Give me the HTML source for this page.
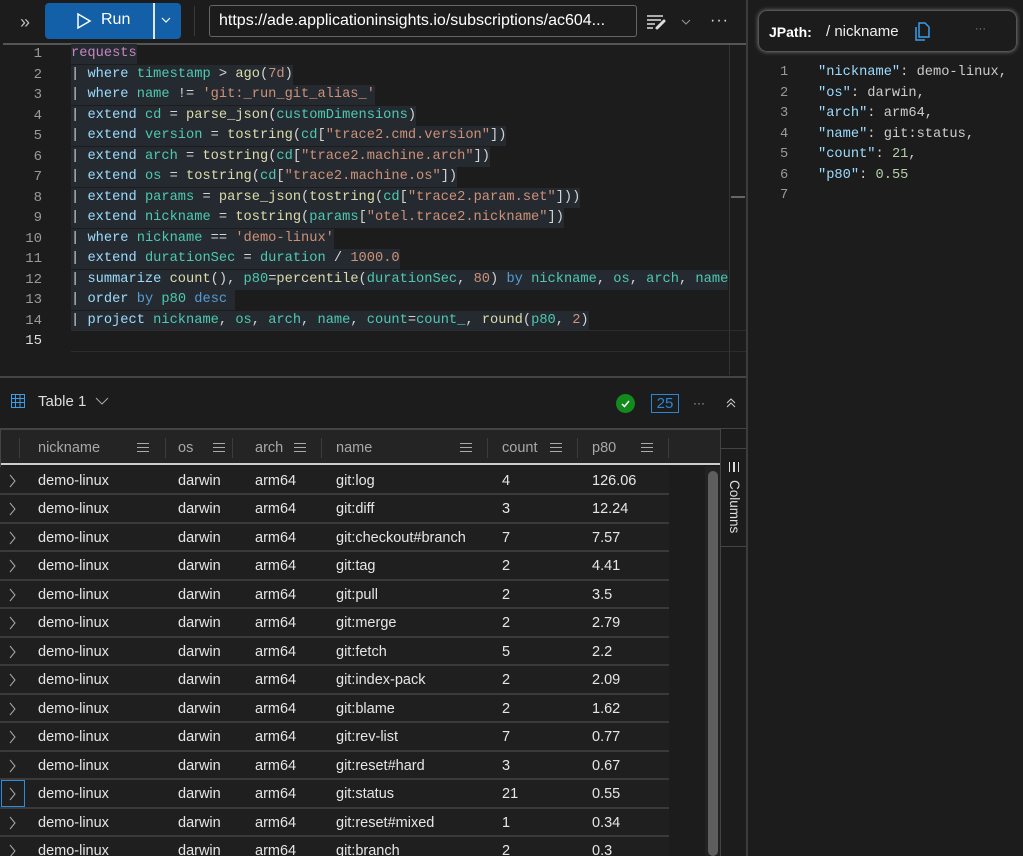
<!DOCTYPE html>
<html><head><meta charset="utf-8"><style>
*{margin:0;padding:0;box-sizing:border-box}
html,body{width:1023px;height:856px;overflow:hidden}
body{background:#1c1c1c;font-family:"Liberation Sans",sans-serif;color:#ddd;position:relative}
.abs{position:absolute}
.mono{font-family:"Liberation Mono",monospace;font-size:13.7px}
.ln{position:absolute;left:0;width:42px;text-align:right;color:#9a9a9a;font-size:14px}
.cl{position:absolute;left:71px;white-space:pre;background:#252a30;height:20px;line-height:20px}
.k{color:#9cdcfe}.t{color:#4ec9b0}.f{color:#dcdcaa}.s{color:#ce9178}.b{color:#569cd6}.p{color:#c586c0}.w{color:#d4d4d4}.n{color:#ce9178}
.row{position:absolute;left:0;width:669px;height:28.5px;background:#1f1f1f;border-bottom:2px solid #3a3a3a;font-size:14.5px;color:#e6e6e6}
.row span{position:absolute;top:6px}
.hd span{position:absolute;top:10px;color:#a8a8a8;font-size:14.5px}
.menu{position:absolute;top:13px;width:12px;height:9px;border-top:1.5px solid #aaa;border-bottom:1.5px solid #aaa}
.menu:after{content:"";position:absolute;left:0;right:0;top:2.5px;border-top:1.5px solid #aaa}
.sep{position:absolute;top:8px;width:1px;height:20px;background:#3c3c3c}
</style></head><body>
<div class="abs" style="left:20px;top:12px;color:#bbb;font-size:18px">»</div>
<div class="abs" style="left:45px;top:3px;width:136px;height:36px;background:#1460a8;border-radius:4px"></div>
<svg class="abs" style="left:76px;top:12px" width="16" height="18"><path d="M2 2 L14 9 L2 16 Z" fill="none" stroke="#fff" stroke-width="1.5"/></svg>
<div class="abs" style="left:101px;top:11px;color:#fff;font-size:16px">Run</div>
<div class="abs" style="left:153px;top:3px;width:2px;height:36px;background:#dfe8f2"></div>
<svg class="abs" style="left:161px;top:17px" width="10" height="6"><path d="M1 1 L5 5 L9 1" fill="none" stroke="#fff" stroke-width="1.2"/></svg>
<div class="abs" style="left:194px;top:6px;width:1px;height:30px;background:#3a3a3a"></div>
<div class="abs" style="left:209px;top:5px;width:428px;height:32px;border:1px solid #666;border-radius:3px;color:#fff;font-size:16px;padding:6px 9px;white-space:nowrap;overflow:hidden">https://ade.applicationinsights.io/subscriptions/ac604...</div>
<svg class="abs" style="left:646px;top:13px" width="22" height="18"><path d="M1 3h16M1 7h14M1 11h8M1 15h6" stroke="#ddd" stroke-width="1.5"/><path d="M11 15 L18 8" stroke="#ddd" stroke-width="3" stroke-linecap="round"/></svg>
<svg class="abs" style="left:681px;top:19px" width="10" height="6"><path d="M1 1 L5 5 L9 1" fill="none" stroke="#999" stroke-width="1"/></svg>
<div class="abs" style="left:710px;top:12px;color:#ddd;font-size:16px;letter-spacing:1px">···</div>
<div class="abs" style="left:3px;top:43px;width:743px;height:2px;background:#555"></div>
<div class="mono">
<div class="ln" style="top:44px;line-height:20px">1</div><div class="cl" style="top:44px"><span class="p">requests</span></div>
<div class="ln" style="top:64.5px;line-height:20px">2</div><div class="cl" style="top:64.5px"><span class="w">| </span><span class="k">where</span> <span class="t">timestamp</span><span class="w"> &gt; </span><span class="f">ago</span><span class="w">(</span><span class="n">7d</span><span class="w">)</span></div>
<div class="ln" style="top:85px;line-height:20px">3</div><div class="cl" style="top:85px"><span class="w">| </span><span class="k">where</span> <span class="t">name</span><span class="w"> != </span><span class="s">'git:_run_git_alias_'</span></div>
<div class="ln" style="top:105.5px;line-height:20px">4</div><div class="cl" style="top:105.5px"><span class="w">| </span><span class="k">extend</span> <span class="t">cd</span><span class="w"> = </span><span class="f">parse_json</span><span class="w">(</span><span class="t">customDimensions</span><span class="w">)</span></div>
<div class="ln" style="top:126px;line-height:20px">5</div><div class="cl" style="top:126px"><span class="w">| </span><span class="k">extend</span> <span class="t">version</span><span class="w"> = </span><span class="f">tostring</span><span class="w">(</span><span class="t">cd</span><span class="w">[</span><span class="s">"trace2.cmd.version"</span><span class="w">])</span></div>
<div class="ln" style="top:146.5px;line-height:20px">6</div><div class="cl" style="top:146.5px"><span class="w">| </span><span class="k">extend</span> <span class="t">arch</span><span class="w"> = </span><span class="f">tostring</span><span class="w">(</span><span class="t">cd</span><span class="w">[</span><span class="s">"trace2.machine.arch"</span><span class="w">])</span></div>
<div class="ln" style="top:167px;line-height:20px">7</div><div class="cl" style="top:167px"><span class="w">| </span><span class="k">extend</span> <span class="t">os</span><span class="w"> = </span><span class="f">tostring</span><span class="w">(</span><span class="t">cd</span><span class="w">[</span><span class="s">"trace2.machine.os"</span><span class="w">])</span></div>
<div class="ln" style="top:187.5px;line-height:20px">8</div><div class="cl" style="top:187.5px"><span class="w">| </span><span class="k">extend</span> <span class="t">params</span><span class="w"> = </span><span class="f">parse_json</span><span class="w">(</span><span class="f">tostring</span><span class="w">(</span><span class="t">cd</span><span class="w">[</span><span class="s">"trace2.param.set"</span><span class="w">]))</span></div>
<div class="ln" style="top:208px;line-height:20px">9</div><div class="cl" style="top:208px"><span class="w">| </span><span class="k">extend</span> <span class="t">nickname</span><span class="w"> = </span><span class="f">tostring</span><span class="w">(</span><span class="t">params</span><span class="w">[</span><span class="s">"otel.trace2.nickname"</span><span class="w">])</span></div>
<div class="ln" style="top:228.5px;line-height:20px">10</div><div class="cl" style="top:228.5px"><span class="w">| </span><span class="k">where</span> <span class="t">nickname</span><span class="w"> == </span><span class="s">'demo-linux'</span></div>
<div class="ln" style="top:249px;line-height:20px">11</div><div class="cl" style="top:249px"><span class="w">| </span><span class="k">extend</span> <span class="t">durationSec</span><span class="w"> = </span><span class="t">duration</span><span class="w"> / </span><span class="n">1000.0</span></div>
<div class="ln" style="top:269.5px;line-height:20px">12</div><div class="cl" style="top:269.5px"><span class="w">| </span><span class="k">summarize</span> <span class="f">count</span><span class="w">(), </span><span class="t">p80</span><span class="w">=</span><span class="f">percentile</span><span class="w">(</span><span class="t">durationSec</span><span class="w">, </span><span class="n">80</span><span class="w">) </span><span class="b">by</span> <span class="t">nickname</span><span class="w">, </span><span class="t">os</span><span class="w">, </span><span class="t">arch</span><span class="w">, </span><span class="t">name</span></div>
<div class="ln" style="top:290px;line-height:20px">13</div><div class="cl" style="top:290px"><span class="w">| </span><span class="k">order</span> <span class="b">by</span> <span class="t">p80</span> <span class="b">desc</span> </div>
<div class="ln" style="top:310.5px;line-height:20px">14</div><div class="cl" style="top:310.5px"><span class="w">| </span><span class="k">project</span> <span class="t">nickname</span><span class="w">, </span><span class="t">os</span><span class="w">, </span><span class="t">arch</span><span class="w">, </span><span class="t">name</span><span class="w">, </span><span class="t">count</span><span class="w">=</span><span class="t">count_</span><span class="w">, </span><span class="f">round</span><span class="w">(</span><span class="t">p80</span><span class="w">, </span><span class="n">2</span><span class="w">)</span></div>
<div class="ln" style="top:331px;line-height:20px;color:#ddd">15</div>
</div>
<div class="abs" style="left:71px;top:330px;width:675px;height:22px;border-top:1px solid #2c2c2c;border-bottom:1px solid #2c2c2c"></div>
<div class="abs" style="left:729px;top:45px;width:1px;height:330px;background:#333"></div>
<div class="abs" style="left:731px;top:196px;width:14px;height:2px;background:#666"></div>
<div class="abs" style="left:0;top:376px;width:746px;height:2px;background:#444"></div>
<div class="abs" style="left:746px;top:0;width:2px;height:856px;background:#3c3c3c"></div>
<svg class="abs" style="left:11px;top:394px" width="14" height="14"><rect x="0.5" y="0.5" width="13" height="13" fill="none" stroke="#3b9ce8"/><path d="M0 4.5h14M0 8.5h14M4.5 0v14M9 0v14" stroke="#3b9ce8"/></svg>
<div class="abs" style="left:38px;top:393px;font-size:15px;color:#ddd">Table 1</div>
<svg class="abs" style="left:95px;top:397px" width="14" height="8"><path d="M1 1 L7 7 L13 1" fill="none" stroke="#aaa" stroke-width="1"/></svg>
<div class="abs" style="left:616px;top:394px;width:19px;height:19px;border-radius:50%;background:#138a1c"></div>
<svg class="abs" style="left:620px;top:398px" width="11" height="11"><path d="M2 6 L4.5 8.5 L9 3" fill="none" stroke="#fff" stroke-width="1.5"/></svg>
<div class="abs" style="left:651px;top:394px;width:28px;height:19px;border:1px solid #2a86d6;color:#2a86d6;font-size:15px;text-align:center;line-height:17px">25</div>
<div class="abs" style="left:693px;top:396px;color:#aaa;font-size:12px">···</div>
<svg class="abs" style="left:726px;top:398px" width="10" height="10"><path d="M1 5 L5 1 L9 5 M1 9 L5 5 L9 9" fill="none" stroke="#ccc" stroke-width="1"/></svg>
<div class="abs" style="left:0;top:428px;width:746px;height:1px;background:#444"></div>
<div class="abs" style="left:0;top:429px;width:720px;height:427px;border-left:1px solid #444;border-top:1px solid #444"></div>
<div class="abs hd" style="left:1px;top:430px;width:719px;height:35px;background:#242424;border-bottom:2px solid #ccc">
<div class="sep" style="left:18px"></div>
<span style="left:37px">nickname</span><div class="menu" style="left:136px"></div><div class="sep" style="left:164px"></div>
<span style="left:177px">os</span><div class="menu" style="left:212px"></div><div class="sep" style="left:231px"></div>
<span style="left:254px">arch</span><div class="menu" style="left:293px"></div><div class="sep" style="left:320px"></div>
<span style="left:335px">name</span><div class="menu" style="left:459px"></div><div class="sep" style="left:486px"></div>
<span style="left:501px">count</span><div class="menu" style="left:549px"></div><div class="sep" style="left:576px"></div>
<span style="left:591px">p80</span><div class="menu" style="left:640px"></div><div class="sep" style="left:667px"></div>
</div>
<div id="rows"></div>
<div class="abs" style="left:705px;top:467px;width:15px;height:389px;background:#222"></div>
<div class="abs" style="left:708px;top:471px;width:10px;height:385px;border-radius:5px;background:#5e5e5e"></div>
<div class="abs" style="left:720px;top:429px;width:26px;height:427px;border-left:1px solid #444;background:#1c1c1c"></div>
<div class="abs" style="left:721px;top:448px;width:25px;height:1px;background:#444"></div>
<div class="abs" style="left:721px;top:546px;width:25px;height:1px;background:#444"></div>
<div class="abs" style="left:729px;top:462px;width:10px;height:10px;border-left:1px solid #ddd;border-right:1px solid #ddd"><div style="margin-left:3px;width:2px;height:10px;border-left:1px solid #ddd;border-right:1px solid #ddd"></div></div>
<div class="abs" style="left:742px;top:480px;transform:rotate(90deg);transform-origin:0 0;color:#ddd;font-size:13.5px">Columns</div>
<div class="abs" style="left:758px;top:10px;width:259px;height:42px;border:1px solid #555;border-radius:9px;box-shadow:0 0 4px #777"></div>
<div class="abs" style="left:769px;top:24px;font-size:14px;color:#fff;font-weight:bold">JPath:</div>
<div class="abs" style="left:826px;top:23px;font-size:15px;color:#eee">/ nickname</div>
<svg class="abs" style="left:914px;top:22px" width="18" height="20"><path d="M5 1h6l4 4v10H5z" fill="none" stroke="#3b9ce8" stroke-width="1.5"/><path d="M2 5v13h9" fill="none" stroke="#3b9ce8" stroke-width="1.5"/></svg>
<div class="abs" style="left:975px;top:23px;color:#888;font-size:11px">···</div>
<div class="mono" style="font-size:13.7px">
<div class="abs" style="left:780px;top:63px;line-height:20.5px;color:#999;text-align:right;width:8px">1<br>2<br>3<br>4<br>5<br>6<br>7</div>
<div class="abs" style="left:818px;top:63px;line-height:20.5px;color:#ccc;white-space:pre"><span class="k">"nickname"</span>: demo-linux,
<span class="k">"os"</span>: darwin,
<span class="k">"arch"</span>: arm64,
<span class="k">"name"</span>: git:status,
<span class="k">"count"</span>: <span style="color:#b5cea8">21</span>,
<span class="k">"p80"</span>: <span style="color:#b5cea8">0.55</span></div>
</div>
<script>
var d=[["git:log",4,"126.06"],["git:diff",3,"12.24"],["git:checkout#branch",7,"7.57"],["git:tag",2,"4.41"],["git:pull",2,"3.5"],["git:merge",2,"2.79"],["git:fetch",5,"2.2"],["git:index-pack",2,"2.09"],["git:blame",2,"1.62"],["git:rev-list",7,"0.77"],["git:reset#hard",3,"0.67"],["git:status",21,"0.55"],["git:reset#mixed",1,"0.34"],["git:branch",2,"0.3"]];
var h="";d.forEach(function(r,i){var t=466.5+i*28.5;
h+='<div class="row" style="top:'+t+'px">'+(i==11?'<div style="position:absolute;left:1px;top:0;width:24px;height:27px;border:1px solid #2a8ee0"></div>':'')+'<svg style="position:absolute;left:9px;top:7px" width="8" height="14"><path d="M1 1 L6 7 L1 13" fill="none" stroke="#aaa" stroke-width="1"/></svg><span style="left:38px">demo-linux</span><span style="left:178px">darwin</span><span style="left:255px">arm64</span><span style="left:336px">'+r[0]+'</span><span style="left:502px">'+r[1]+'</span><span style="left:592px">'+r[2]+'</span></div>';});
document.getElementById("rows").innerHTML=h;
</script>
</body></html>
